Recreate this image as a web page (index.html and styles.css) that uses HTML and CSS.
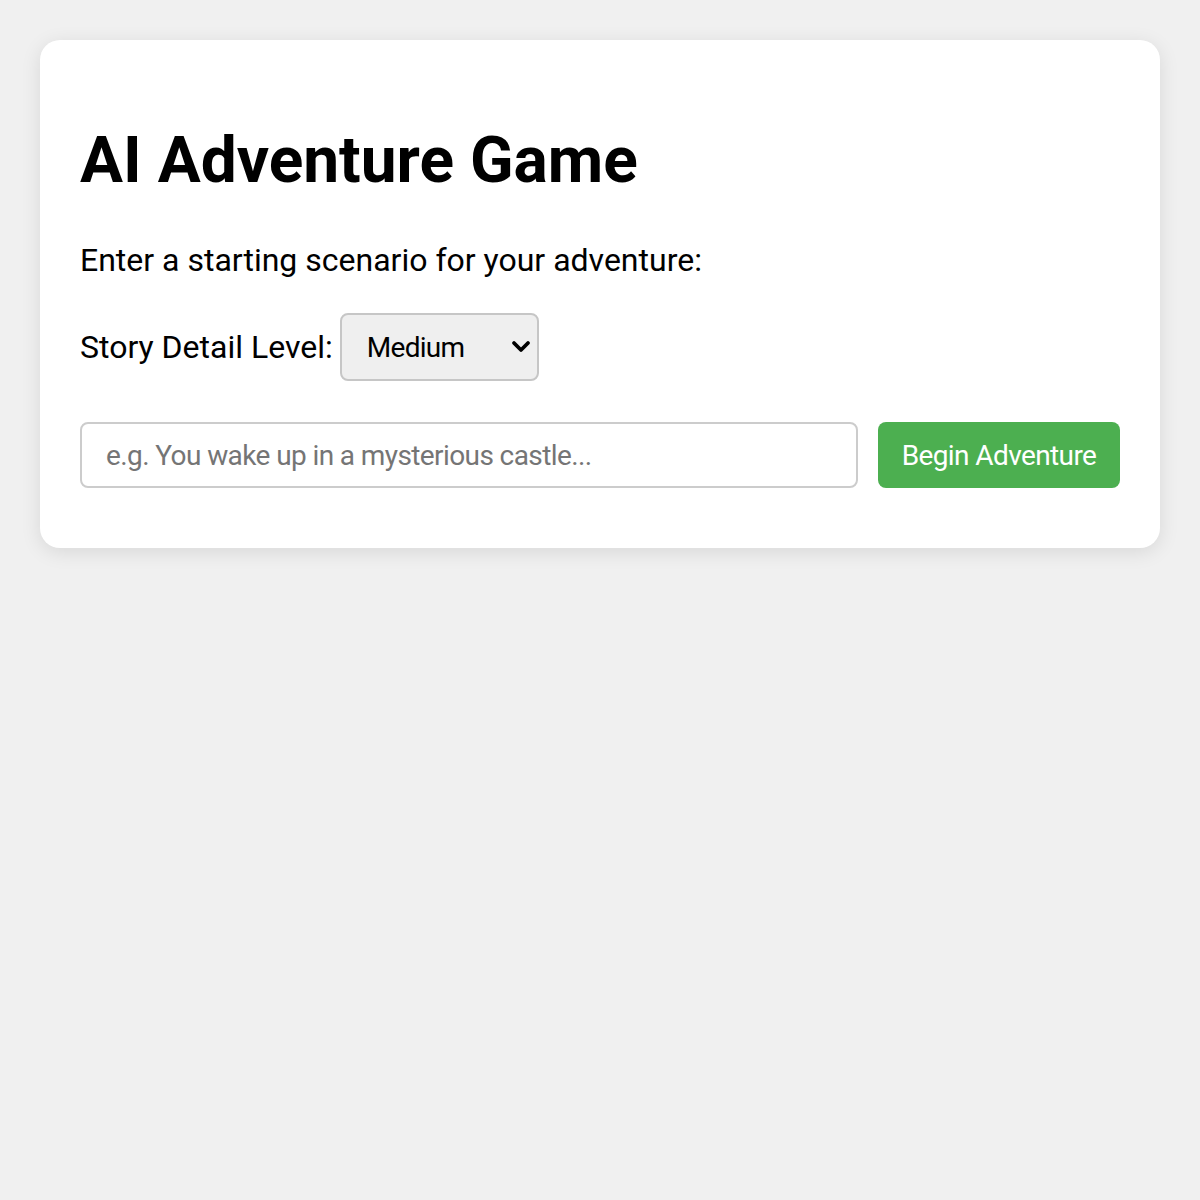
FILE: index.html
```html
<!DOCTYPE html>
<html lang="en">
<head>
<meta charset="utf-8">
<title>AI Adventure Game</title>
<link rel="stylesheet" href="styles.css">
</head>
<body>
<main class="card">
  <h1 class="title">AI Adventure Game</h1>
  <p class="intro">Enter a starting scenario for your adventure:</p>
  <div class="detail-row">
    <label class="detail-label" for="detail">Story Detail Level:</label>
    <div class="select-wrap">
      <select id="detail" class="detail-select">
        <option>Low</option>
        <option selected>Medium</option>
        <option>High</option>
      </select>
      <svg class="chevron" width="20" height="14" viewBox="0 0 20 14" aria-hidden="true">
        <path d="M3 3 L10 10 L17 3" fill="none" stroke="#000" stroke-width="3.8" stroke-linecap="round" stroke-linejoin="round"/>
      </svg>
    </div>
  </div>
  <div class="input-row">
    <input class="scenario-input" type="text" placeholder="e.g. You wake up in a mysterious castle...">
    <button class="begin-btn" type="button">Begin Adventure</button>
  </div>
</main>
</body>
</html>
```

FILE: styles.css
```css
html, body {
  margin: 0;
  padding: 0;
}
body {
  background: #f0f0f0;
  font-family: Roboto, "Liberation Sans", Arial, sans-serif;
  color: #000;
  padding: 40px;
}
.card {
  display: block;
  background: #fff;
  border-radius: 20px;
  box-shadow: 0 4px 20px rgba(0, 0, 0, 0.1);
  padding: 40px;
}
.title {
  font-size: 64px;
  font-weight: 700;
  margin: 43px 0 43px;
  line-height: 75px;
}
.intro {
  font-size: 32px;
  line-height: 38px;
  margin: 0 0 34px;
}
.detail-row {
  display: flex;
  align-items: center;
  height: 68px;
  margin-bottom: 41px;
}
.detail-label {
  font-size: 32px;
  line-height: 38px;
  margin-right: 7px;
}
.select-wrap {
  position: relative;
  display: inline-block;
}
.detail-select {
  appearance: none;
  -webkit-appearance: none;
  display: block;
  box-sizing: border-box;
  width: 199px;
  height: 68px;
  padding: 0 0 0 25px;
  font-family: Roboto, "Liberation Sans", Arial, sans-serif;
  font-size: 28px;
  letter-spacing: -0.7px;
  color: #000;
  background: #efefef;
  border: 2px solid #c6c6c6;
  border-radius: 8px;
  outline: none;
}
.chevron {
  position: absolute;
  right: 8px;
  top: 27px;
  pointer-events: none;
}
.input-row {
  display: flex;
  gap: 20px;
  margin-bottom: 20px;
}
.scenario-input {
  flex: 1;
  box-sizing: border-box;
  height: 66px;
  padding: 0 24px;
  font-family: Roboto, "Liberation Sans", Arial, sans-serif;
  font-size: 28px;
  letter-spacing: -0.6px;
  border: 2px solid #ccc;
  border-radius: 8px;
  outline: none;
  color: #000;
}
.scenario-input::placeholder {
  color: #757575;
}
.begin-btn {
  box-sizing: border-box;
  height: 66px;
  width: 242px;
  padding: 0;
  border: none;
  border-radius: 8px;
  background: #4caf50;
  color: #fff;
  font-family: Roboto, "Liberation Sans", Arial, sans-serif;
  font-size: 28px;
  letter-spacing: -0.6px;
  white-space: nowrap;
  cursor: pointer;
}
```
